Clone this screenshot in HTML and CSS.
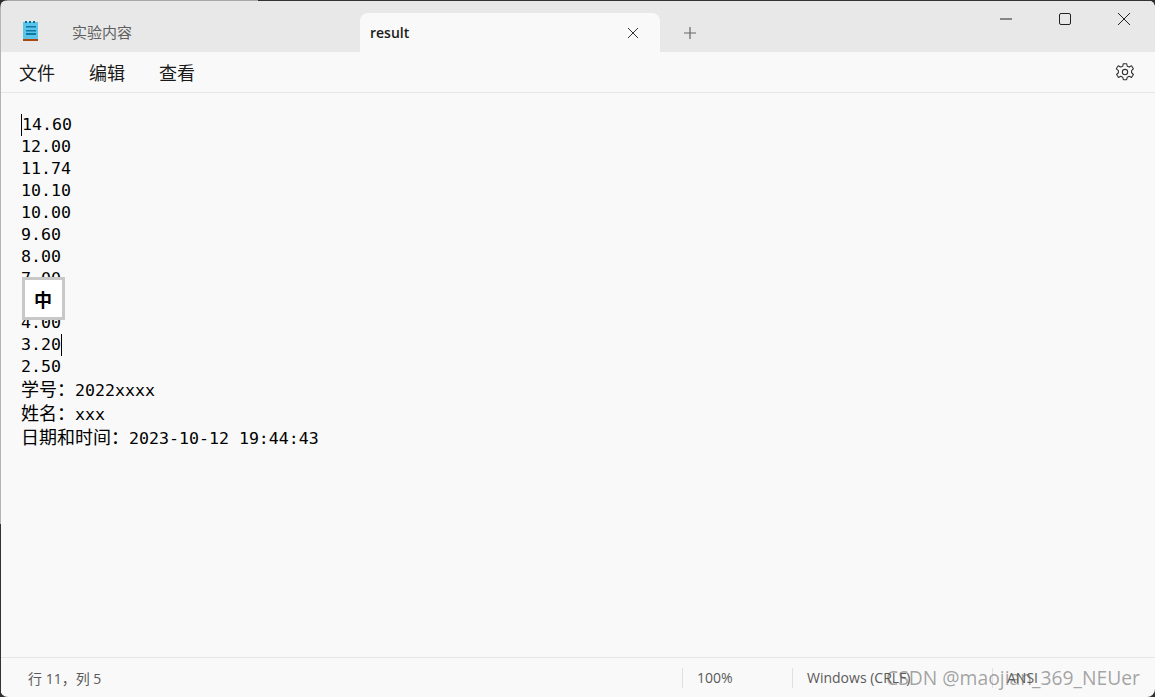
FILE: index.html
```html
<!DOCTYPE html>
<html lang="zh-CN">
<head>
  <meta charset="UTF-8">
  <meta name="viewport" content="width=device-width, initial-scale=1.0">
  <title>result - 记事本</title>
  <link rel="stylesheet" href="styles.css">
</head>
<body>

  <div class="window">
    <header class="titlebar">
      <div class="app-icon">
        <svg width="16" height="20" viewBox="0 0 16 20">
          <rect x="0" y="1" width="15" height="17" fill="#5cc4e8"/>
          <rect x="2" y="0" width="2" height="2" fill="#0a6f96"/>
          <rect x="6" y="0" width="2" height="2" fill="#0a6f96"/>
          <rect x="10" y="0" width="2" height="2" fill="#0a6f96"/>
          <rect x="3" y="5" width="10" height="1.5" fill="#0a7aa5"/>
          <rect x="3" y="9" width="10" height="1.5" fill="#0a7aa5"/>
          <rect x="3" y="12" width="10" height="2" fill="#0a7aa5"/>
          <rect x="0" y="18" width="15" height="2" fill="#a84a10"/>
        </svg>
      </div>
      <div class="tab">实验内容</div>
      <div class="tab tab-active">
        <span>result</span>
        <svg class="tab-close" width="12" height="12" viewBox="0 0 12 12">
          <path d="M1 1L11 11M11 1L1 11" stroke="#333" fill="none"/>
        </svg>
      </div>
      <div class="tab-add">
        <svg width="14" height="14" viewBox="0 0 14 14">
          <path d="M7 1V13M1 7H13" stroke="#666" stroke-width="1.2" fill="none"/>
        </svg>
      </div>
      <div class="win-buttons">
        <svg width="12" height="12" viewBox="0 0 12 12"><path d="M0 6H12" stroke="#222" fill="none"/></svg>
        <svg width="12" height="12" viewBox="0 0 12 12"><rect x="0.5" y="0.5" width="11" height="11" rx="1.5" stroke="#222" fill="none"/></svg>
        <svg width="12" height="12" viewBox="0 0 12 12"><path d="M0 0L12 12M12 0L0 12" stroke="#222" fill="none"/></svg>
      </div>
    </header>

    <nav class="menubar">
      <span class="menu-item">文件</span>
      <span class="menu-item">编辑</span>
      <span class="menu-item">查看</span>
      <svg class="settings" width="20" height="20" viewBox="0 0 24 24">
        <circle cx="12" cy="12" r="3.2" stroke="#333" stroke-width="1.3" fill="none"/>
        <path d="M10 2h4l.7 3 2.4 1.1 2.7-1.5 2.3 3.6-2.2 2.1v2.600l2.200 2.100-2.300 3.600-2.700-1.500-2.400 1.100-.7 3h-4l-.7-3-2.400-1.100-2.700 1.500-2.300-3.600 2.200-2.100v-2.600L1.600 8.200l2.300-3.600 2.700 1.500L9.300 5z" stroke="#333" stroke-width="1.300" stroke-linejoin="round" fill="none"/>
      </svg>
    </nav>

    <main class="editor">
      <div class="line"><span class="caret"></span>14.60</div>
      <div class="line">12.00</div>
      <div class="line">11.74</div>
      <div class="line">10.10</div>
      <div class="line">10.00</div>
      <div class="line">9.60</div>
      <div class="line">8.00</div>
      <div class="line">7.00</div>
      <div class="line line-hidden">5.00</div>
      <div class="line">4.00</div>
      <div class="line">3.20<span class="caret"></span></div>
      <div class="line">2.50</div>
      <div class="line line-cjk"><span class="cjk">学号：</span>2022xxxx</div>
      <div class="line line-cjk"><span class="cjk">姓名：</span>xxx</div>
      <div class="line line-cjk"><span class="cjk">日期和时间：</span>2023-10-12 19:44:43</div>
      <div class="ime-box">中</div>
    </main>

    <footer class="statusbar">
      <div class="status-pos">行 11，列 5</div>
      <div class="status-cell status-zoom">100%</div>
      <div class="status-cell status-eol">Windows (CRLF)</div>
      <div class="status-cell status-enc">ANSI</div>
      <div class="watermark">CSDN @maojian_369_NEUer</div>
    </footer>
  </div>

</body>
</html>
```

FILE: styles.css
```css
* {
  margin: 0;
  padding: 0;
  box-sizing: border-box;
}

body {
  background-color: #2e2e2e;
  height: 697px;
  overflow: hidden;
  font-family: "Noto Sans CJK SC", "Open Sans", sans-serif;
}

/* a borda muda de cor onde a janela de tras termina */
.window {
  height: 697px;
  padding: 1px 0 0 1px;
  display: flex;
  flex-direction: column;
  background:
    linear-gradient(to right, #a8a8a8 258px, #333 258px) top / 100% 1px no-repeat,
    linear-gradient(to bottom, #b4b4b4 524px, #333 524px) left / 1px 100% no-repeat,
    #f9f9f9;
  border-radius: 8px;
  overflow: hidden;
}

/* barra de titulo */
.titlebar {
  height: 51px;
  flex-shrink: 0;
  display: flex;
  align-items: flex-end;
  background-color: #e8e8e8;
}

.app-icon {
  width: 59px;
  height: 40px;
  padding: 9px 0 0 22px;
}

.tab {
  width: 300px;
  height: 39px;
  padding: 0 12px 2px;
  display: flex;
  align-items: center;
  font-size: 15px;
  color: #5f5f5f;
  background-color: #e8e8e8;
}

.tab-active {
  justify-content: space-between;
  padding: 0 21px 0 10px;
  border-radius: 8px 8px 0 0;
  background-color: #f9f9f9;
  color: #1c1c1c;
  font-family: "Open Sans", sans-serif;
  font-weight: 600;
  font-size: 14px;
}

.tab-add {
  width: 60px;
  height: 39px;
  display: flex;
  align-items: center;
  justify-content: center;
}

.win-buttons {
  margin-left: auto;
  height: 51px;
  width: 178px;
  padding: 12px 25px 0 0;
  display: flex;
  justify-content: flex-end;
  gap: 47px;
}

/* menu */
.menubar {
  height: 41px;
  flex-shrink: 0;
  display: flex;
  align-items: center;
  gap: 34px;
  padding: 0 20px 0 18px;
  border-bottom: 1px solid #e6e6e6;
}

.menu-item {
  font-size: 18px;
  color: #1a1a1a;
}

.settings {
  margin-left: auto;
}

/* area de texto */
.editor {
  position: relative;
  flex: 1;
  padding: 21px 0 0 20px;
  font-family: "DejaVu Sans Mono", "Noto Sans CJK SC", monospace;
  font-size: 16.6px;
  color: #000;
}

.line {
  height: 22px;
  line-height: 22px;
  white-space: pre;
}

.line-cjk {
  height: 24px;
  line-height: 20px;
}

.cjk {
  font-family: "Noto Sans CJK SC", sans-serif;
  font-size: 18px;
}

.caret {
  display: inline-block;
  width: 0;
  height: 22px;
  vertical-align: top;
  border-left: 1px solid #000;
}

/* fica por cima da linha 9 */
.ime-box {
  position: absolute;
  left: 21px;
  top: 184px;
  width: 43px;
  height: 43px;
  padding-right: 1px;
  display: flex;
  align-items: center;
  justify-content: center;
  background-color: #fff;
  border: 3px solid #c8c8c8;
  font-family: "Noto Sans CJK SC", sans-serif;
  font-size: 18px;
  font-weight: 700;
  color: #000;
}

.line-hidden {
  visibility: hidden;
}

/* barra de estado */
.statusbar {
  position: relative;
  height: 40px;
  flex-shrink: 0;
  display: flex;
  align-items: center;
  border-top: 1px solid #e6e6e6;
  font-family: "Open Sans", "Noto Sans CJK SC", sans-serif;
  font-size: 14px;
  color: #5a5a5a;
}

.status-pos {
  width: 681px;
  padding-left: 27px;
}

.status-cell {
  height: 20px;
  line-height: 20px;
  padding-left: 14px;
  border-left: 1px solid #e0e0e0;
}

.status-zoom {
  width: 110px;
}

.status-eol {
  width: 200px;
}

.status-enc {
  flex: 1;
}

.watermark {
  position: absolute;
  right: 15px;
  top: 6px;
  font-family: "Open Sans", sans-serif;
  font-size: 19.3px;
  color: rgba(90, 90, 90, 0.55);
  white-space: nowrap;
}
```
